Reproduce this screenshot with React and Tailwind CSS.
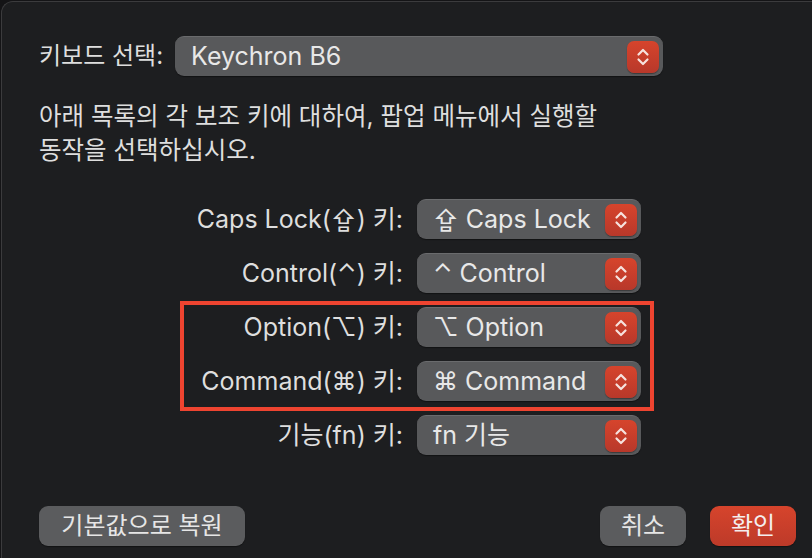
import React from 'react';

const font = {fontFamily: 'Inter, "Noto Sans CJK KR", "DejaVu Sans", sans-serif'};

function Stepper() {
    return (
        <div className="flex items-center justify-center w-[32px] h-[32px] rounded-[7px] bg-gradient-to-b from-[#d6442c] to-[#b8382a] shadow-[0_1px_1px_rgba(0,0,0,0.35)]">
            <svg width="14" height="20" viewBox="0 0 14 20" fill="none" stroke="#f6e2de" strokeWidth="2.2" strokeLinecap="round" strokeLinejoin="round">
                <path d="M2.5 7.5 L7 3 L11.5 7.5"/>
                <path d="M2.5 12.5 L7 17 L11.5 12.5"/>
            </svg>
        </div>
    );
}

function Popup({value, width}) {
    return (
        <div className={`flex items-center justify-between h-[40px] rounded-[9px] bg-[#58595b] border-t border-[#6a6b6d] pl-[16px] pr-[4px] shadow-[0_1px_1px_rgba(0,0,0,0.4)] ${width}`}>
            <span className="text-[25px] text-[#e8e8e8] leading-none whitespace-nowrap">{value}</span>
            <Stepper/>
        </div>
    );
}

const rows = [
    {label: 'Caps Lock(⇪) 키:', value: '⇪ Caps Lock'},
    {label: 'Control(⌃) 키:', value: '⌃ Control'},
    {label: 'Option(⌥) 키:', value: '⌥ Option'},
    {label: 'Command(⌘) 키:', value: '⌘ Command'},
    {label: '기능(fn) 키:', value: 'fn 기능'},
];

export default function App() {
    return (
        <div style={font} className="w-[812px] h-[558px] bg-[#141416] overflow-hidden pt-px pl-px">
            <div className="w-[830px] h-[570px] bg-[#1d1e20] rounded-tl-[12px] border-l border-t border-[#3b3b3d] flex flex-col pl-[37px] pt-[34px]">
                {/* keyboard select */}
                <div className="flex items-center gap-[12px]">
                    <span className="text-[24px] text-[#dedede] leading-none">키보드 선택:</span>
                    <Popup value="Keychron B6" width="w-[488px]"/>
                </div>

                <p className="mt-[23px] text-[24.5px] leading-[34px] text-[#dedede]">
                    아래 목록의 각 보조 키에 대하여, 팝업 메뉴에서 실행할<br/>동작을 선택하십시오.
                </p>

                {/* modifier rows */}
                <div className="relative mt-[32px] flex flex-col gap-[14px]">
                    {rows.map(r => (
                        <div key={r.label} className="flex items-center gap-[14px]">
                            <span className="w-[364px] text-right text-[25px] text-[#dedede] leading-none whitespace-nowrap">{r.label}</span>
                            <Popup value={r.value} width="w-[224px]"/>
                        </div>
                    ))}
                    <div className="absolute left-[141px] top-[102px] w-[474px] h-[110px] border-[4px] border-[#ee4430] pointer-events-none"></div>
                </div>

                {/* buttons */}
                <div className="mt-[51px] flex items-center w-[757px]">
                    <button className="h-[40px] w-[206px] rounded-[9px] bg-[#5b5c5e] text-[24px] text-[#e6e6e6] shadow-[0_1px_1px_rgba(0,0,0,0.4)]">기본값으로 복원</button>
                    <div className="flex-1"></div>
                    <button className="h-[40px] w-[86px] rounded-[9px] bg-[#5b5c5e] text-[24px] text-[#e6e6e6] shadow-[0_1px_1px_rgba(0,0,0,0.4)]">취소</button>
                    <button className="ml-[24px] h-[40px] w-[86px] rounded-[9px] bg-gradient-to-b from-[#d6442c] to-[#bd3a29] text-[24px] text-[#f4eeee] shadow-[0_1px_1px_rgba(0,0,0,0.4)]">확인</button>
                </div>
            </div>
        </div>
    );
}
